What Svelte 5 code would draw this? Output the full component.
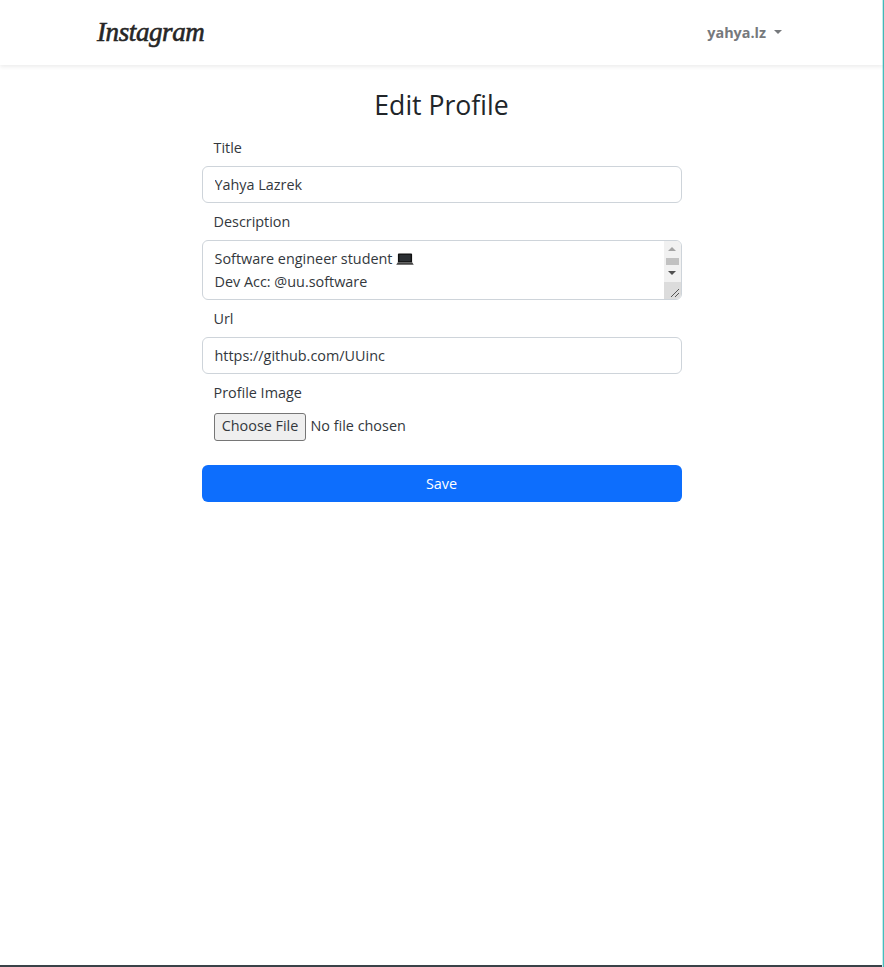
<script lang="ts">
  let title = $state("Yahya Lazrek");
  let url = $state("https://github.com/UUinc");
</script>

<div class="page">
  <nav class="navbar">
    <div class="nav-inner">
      <a class="brand" href="#home">Instagram</a>
      <button class="user">yahya.lz<span class="caret"></span></button>
    </div>
  </nav>

  <main class="content">
    <h1>Edit Profile</h1>
    <form onsubmit={(e) => e.preventDefault()}>
      <label for="title">Title</label>
      <input id="title" class="control" type="text" bind:value={title} />

      <label for="description">Description</label>
      <div id="description" class="textarea">
        <div class="lines">
          <div class="line">
            Software engineer student
            <svg class="laptop" viewBox="0 0 16 12" width="18" height="14" aria-hidden="true">
              <path d="M2.5 1h11a.8.8 0 0 1 .8.8V9H1.7V1.800a.8.8 0 0 1 .8-.8z" fill="#111"/>
              <path d="M3 2.200h10V8H3z" fill="#2c3034"/>
              <path d="M1.500 9h13l1.300 2.200H.2z" fill="#444"/>
            </svg>
          </div>
          <div class="line">Dev Acc: @uu.software</div>
        </div>
        <div class="scrollbar" aria-hidden="true">
          <span class="arrow up"></span>
          <span class="thumb"></span>
          <span class="arrow down"></span>
          <span class="resizer">
            <svg viewBox="0 0 17 17" width="17" height="17">
              <path d="M7 15 15 7M11 15 15 11" stroke="#555" stroke-width="1" fill="none"/>
            </svg>
          </span>
        </div>
      </div>

      <label for="url">Url</label>
      <input id="url" class="control" type="text" bind:value={url} />

      <label for="image">Profile Image</label>
      <div class="file">
        <button id="image" class="choose" type="button">Choose File</button>
        <span class="file-name">No file chosen</span>
      </div>

      <button class="save" type="submit">Save</button>
    </form>
  </main>
</div>

<style>
  :global(body) {
    font-family: "Open Sans", sans-serif;
    font-size: 14.4px;
    line-height: 1.6;
    color: #212529;
    background: #fff;
  }

  .page {
    box-sizing: border-box;
    height: 967px;
    padding-right: 1px;
    overflow: hidden;
    box-shadow: inset -1px 0 0 #45bdbd, inset -2px 0 0 #c4ebeb, inset 0 -2px 0 #3a4248;
  }

  .navbar {
    height: 65px;
    box-shadow: 0 2px 4px rgba(0, 0, 0, 0.075);
  }

  .nav-inner {
    display: flex;
    align-items: center;
    justify-content: space-between;
    box-sizing: border-box;
    height: 100%;
    padding: 0 101px 0 97px;
  }

  .brand {
    font-family: "Liberation Serif", serif;
    font-style: italic;
    font-size: 27px;
    line-height: 1;
    letter-spacing: -0.4px;
    color: #262626;
    text-decoration: none;
    -webkit-text-stroke: 0.6px #262626;
  }

  .user {
    display: flex;
    align-items: center;
    padding: 0;
    border: none;
    background: none;
    font: inherit;
    font-weight: 700;
    color: #76797c;
  }

  .caret {
    margin-left: 8px;
    border-top: 4.5px solid #76797c;
    border-left: 4.5px solid transparent;
    border-right: 4.5px solid transparent;
  }

  .content {
    box-sizing: border-box;
    width: 480px;
    margin: 0 auto;
    padding-top: 20px;
  }

  h1 {
    margin: 0 0 11px;
    font-size: 26.6px;
    font-weight: 400;
    line-height: 40px;
    text-align: center;
  }

  form {
    display: flex;
    flex-direction: column;
  }

  label {
    padding-left: 12px;
    margin-bottom: 7px;
    line-height: 23px;
    color: #33383d;
  }

  .control {
    box-sizing: border-box;
    height: 37px;
    margin-bottom: 7px;
    padding: 6px 12px;
    border: 1px solid #ced4da;
    border-radius: 6px;
    font: inherit;
    color: #33383d;
    outline: none;
  }

  .textarea {
    position: relative;
    box-sizing: border-box;
    height: 60px;
    margin-bottom: 7px;
    padding: 6px 12px;
    border: 1px solid #ced4da;
    border-radius: 6px;
    overflow: hidden;
    color: #33383d;
  }

  .line {
    height: 23px;
    line-height: 23px;
    white-space: nowrap;
  }

  .laptop {
    vertical-align: -2px;
  }

  .scrollbar {
    position: absolute;
    top: 0;
    right: 0;
    bottom: 0;
    width: 17px;
    display: flex;
    flex-direction: column;
    align-items: center;
    background: #f1f1f1;
  }

  .arrow {
    width: 0;
    height: 0;
    border-left: 4px solid transparent;
    border-right: 4px solid transparent;
  }

  .arrow.up {
    margin-top: 6px;
    border-bottom: 4px solid #a3a3a3;
  }

  .arrow.down {
    margin-top: 6px;
    border-top: 4px solid #505050;
  }

  .thumb {
    width: 13px;
    height: 7px;
    margin-top: 7px;
    background: #c1c1c1;
  }

  .resizer {
    position: absolute;
    right: 0;
    bottom: 0;
    width: 17px;
    height: 17px;
    background: #dcdcdc;
  }

  .file {
    display: flex;
    align-items: center;
    gap: 4.500px;
    height: 28px;
    margin: 2px 0 24px 12.500px;
    color: #33383d;
  }

  .choose {
    box-sizing: border-box;
    width: 92px;
    height: 28px;
    padding: 0 0 2px;
    border: 1px solid #767676;
    border-radius: 3px;
    background: #efefef;
    font: inherit;
    color: #33383d;
  }

  .file-name {
    padding-bottom: 2px;
  }

  .save {
    height: 37px;
    padding: 0;
    border: none;
    border-radius: 6px;
    background: #0d6efd;
    color: #fff;
    font: inherit;
  }
</style>
